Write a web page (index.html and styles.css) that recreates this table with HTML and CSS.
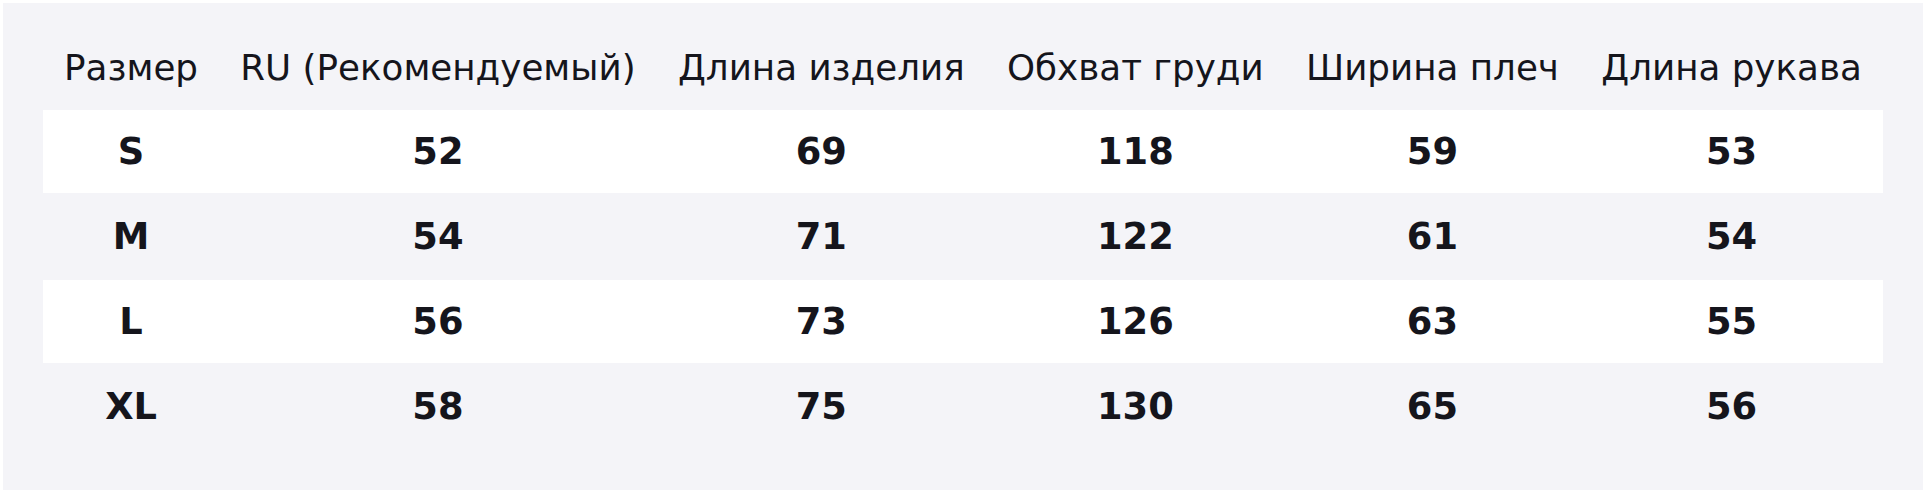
FILE: index.html
```html
<!DOCTYPE html>
<html lang="ru">
<head>
<meta charset="utf-8">
<title>Таблица размеров</title>
<link rel="stylesheet" href="styles.css">
</head>
<body>
<div class="panel">
  <table class="sizes">
    <thead>
      <tr>
        <th>Размер</th>
        <th>RU (Рекомендуемый)</th>
        <th>Длина изделия</th>
        <th>Обхват груди</th>
        <th>Ширина плеч</th>
        <th>Длина рукава</th>
      </tr>
    </thead>
    <tbody>
      <tr class="alt"><td>S</td><td>52</td><td>69</td><td>118</td><td>59</td><td>53</td></tr>
      <tr><td>M</td><td>54</td><td>71</td><td>122</td><td>61</td><td>54</td></tr>
      <tr class="alt"><td>L</td><td>56</td><td>73</td><td>126</td><td>63</td><td>55</td></tr>
      <tr><td>XL</td><td>58</td><td>75</td><td>130</td><td>65</td><td>56</td></tr>
    </tbody>
  </table>
</div>
</body>
</html>
```
FILE: styles.css
```css
html, body {
  margin: 0;
  padding: 0;
  background: #ffffff;
}
body {
  padding: 3px;
  font-family: "DejaVu Sans", Verdana, sans-serif;
  color: #15151c;
}
.panel {
  background: #f4f4f8;
  height: 487px;
  box-sizing: border-box;
  padding: 40px 40px;
}
.sizes {
  width: 100%;
  border-collapse: separate;
  border-spacing: 0 2px;
  font-size: 35.7px;
}
.sizes th {
  font-weight: normal;
  text-align: center;
  white-space: nowrap;
  padding: 2px 21px 19px;
  line-height: 42px;
}
.sizes td {
  font-weight: bold;
  font-size: 36.8px;
  text-align: center;
  height: 83px;
  padding: 0 21px;
  vertical-align: middle;
  line-height: 42px;
}
.sizes tr.alt td {
  background: #ffffff;
}
```
